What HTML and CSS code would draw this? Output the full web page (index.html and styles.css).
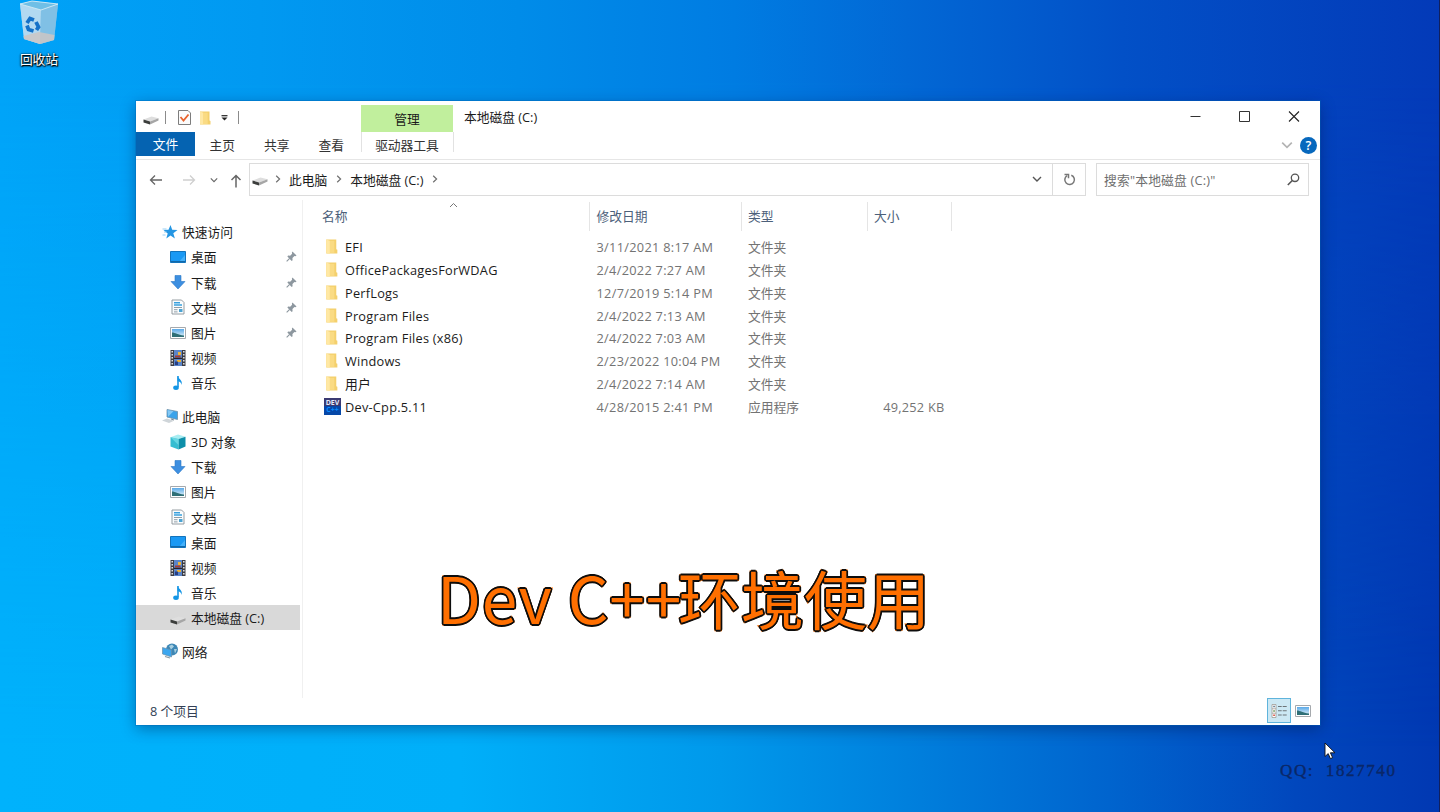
FILE: index.html
```
<!DOCTYPE html>
<html lang="zh-CN">
  <head>
    <meta charset="UTF-8" />
    <meta name="viewport" content="width=device-width, initial-scale=1.0" />
    <title>本地磁盘 (C:)</title>
    <link rel="stylesheet" href="styles.css">
  </head>

  <body>
    <!-- shared icons -->
    <svg class="sprite" width="0" height="0">
      <defs>
        <linearGradient id="sky" x1="0" y1="0" x2="0" y2="1">
          <stop offset="0" stop-color="#5aa9e8" />
          <stop offset="1" stop-color="#e4f3f8" />
        </linearGradient>
      </defs>
      <symbol id="drive" viewBox="0 0 16 16">
        <path d="M.5 9.500 8.500 6.500l7 1.800-8.500 3.200z" fill="#dedede" />
        <path d="M.5 9.500 7 11.500V14.500L.5 12.500z" fill="#3c3e3c" />
        <path d="M7 11.500 15.500 8.300V10.500L7 14.500z" fill="#a6a6a6" />
      </symbol>
      <symbol id="folder" viewBox="0 0 16 16">
        <path d="M3 1.500h9.500v9l1 .5v3.500H3z" fill="#f4d06d" />
        <path d="M3 1.500l3.500 1.200V15L3 13.800z" fill="#ffe8a4" />
        <path d="M6.500 2.700h4.200V14H6.500z" fill="#fadb83" />
      </symbol>
      <symbol id="star" viewBox="0 0 16 16">
        <path d="M8.500 1l1.700 4.700 5.300.2-4.200 3.300 1.600 5.300-4.400-3-4.200 3 1.400-5L1.500 6l5-.3z" fill="#2496e3" />
        <path d="M.5 5h4M.5 11h3M2 8h3" stroke="#7cc3f3" stroke-width=".8" />
      </symbol>
      <symbol id="desktop" viewBox="0 0 16 16">
        <path d="M.5 2.500h15v11H.5z" fill="#1a99f4" stroke="#1373bb" />
        <path d="M9 13 15 6v7z" fill="#45b1fa" />
        <path d="M1 12.500h14" stroke="#1268a8" />
      </symbol>
      <symbol id="down" viewBox="0 0 16 16">
        <path d="M5 1.500h6v6h4L8 15 1 7.500h4z" fill="#3d8fe0" stroke="#2b78c8" stroke-width=".6" />
      </symbol>
      <symbol id="doc" viewBox="0 0 16 16">
        <path d="M2 1h9.500L14 3.500V15H2z" fill="#fafcfd" stroke="#8b9399" stroke-width=".9" />
        <path d="M4 3.800h6M4 6h8" stroke="#39a0dd" stroke-width="1.500" />
        <path d="M4 8.500h8M4 10.700h3.500M4 12.900h3.500" stroke="#929da5" />
        <path d="M9 10h3.500v3H9z" fill="#4aa3d3" />
      </symbol>
      <symbol id="picture" viewBox="0 0 16 16">
        <path d="M.5 2.500h15v11H.5z" fill="#fff" stroke="#a5a9ad" />
        <path d="M2 4h12v8H2z" fill="url(#sky)" />
        <path d="M2 7.500c3 0 6 2.500 12 3v1.500H2z" fill="#2f6f76" />
      </symbol>
      <symbol id="video" viewBox="0 0 16 16">
        <path d="M.5 0h15v16H.5z" fill="#3c3c42" />
        <path d="M4 0h8v16H4z" fill="#5b85c8" />
        <path d="M2.200 1v15M13.800 1v15" stroke="#e3e3e3" stroke-width="1.500" stroke-dasharray="1.500 1.500" />
        <path d="M8 2h3v3H8zM7 10h4v2H7z" fill="#f0b433" />
        <path d="M5 5.500h5l1 2H5z" fill="#a83b34" />
        <path d="M4 7.800h8v1.200H4z" fill="#25252a" />
        <path d="M5 11.500h3V15H5z" fill="#293f83" />
      </symbol>
      <symbol id="music" viewBox="0 0 16 16">
        <path d="M8 1v11" stroke="#1495e5" stroke-width="1.600" />
        <ellipse cx="6" cy="12.700" rx="2.800" ry="2.200" fill="#1495e5" />
        <path d="M7.500 1C9 4.500 13 5 11.500 10c0-2.500-2-3.500-4-4z" fill="#1495e5" />
      </symbol>
      <symbol id="pc" viewBox="0 0 16 16">
        <path d="M5 1.500l10.500 2v8L5 9z" fill="#3aa3ea" stroke="#6e91a8" stroke-width=".8" />
        <path d="M5.500 2l6 1.200L6 8.800z" fill="#83c8f5" />
        <path d="M0 12.500 5 10.500l7 2.200L7 15z" fill="#cfd5d9" />
        <path d="M9 11l3 1" stroke="#7a8993" />
      </symbol>
      <symbol id="cube" viewBox="0 0 16 16">
        <path d="M8 .5l7.500 2.300L8.500 5 .5 3.200z" fill="#a8edf2" />
        <path d="M.5 3.200 8.500 5v10.500L.5 12.500z" fill="#35bdd1" />
        <path d="M8.500 5l7-2.200v9.700l-7 3z" fill="#0d8fa9" />
        <path d="M.5 3.200 8.500 5v6z" fill="#64d6e2" />
      </symbol>
      <symbol id="network" viewBox="0 0 16 16">
        <circle cx="10" cy="6.500" r="6" fill="#3d87b5" />
        <path d="M7 3l3-1.500 2 2-3 3zM12 6l3 0-2 4.500z" fill="#a7cedf" />
        <path d="M.5 4.500l9 2.500v7l-9-3z" fill="#3ba6ef" stroke="#6c8fa7" stroke-width=".7" />
        <path d="M3 13.500l5 1.500" stroke="#8897a0" stroke-width="1.300" />
      </symbol>
      <symbol id="pin" viewBox="0 0 12 12">
        <path d="M7 .5 11.500 5l-1.300.7-1-.2L7 7.700l.2 2.300-1 .8L1.500 6l.8-1 2.200.2L6.700 3l-.3-1.200z" fill="#8d979f" />
        <path d="M4 8 .7 11.300" stroke="#8d979f" stroke-width="1.200" />
      </symbol>
      <symbol id="chevron-right" viewBox="0 0 8 8">
        <path d="M2.200 .8 5.600 4 2.200 7.200" fill="none" stroke="#707070" stroke-width="1.200" />
      </symbol>
      <symbol id="chevron-down" viewBox="0 0 10 10">
        <path d="M1 3l4 4 4-4" fill="none" stroke="currentColor" stroke-width="1.400" />
      </symbol>
    </svg>

    <div class="recycle-bin">
      <svg width="42" height="46" viewBox="0 0 42 46">
        <path d="M1 4 13 1l26 3-4 36-14 4L5 39z" fill="#a8d2ec" opacity=".85" />
        <path d="M1 4l21 6-1 34L5 39z" fill="#b9dcf1" opacity=".85" />
        <path d="M22 10l17-6-4 36-14 4z" fill="#7cbde2" opacity=".8" />
        <path d="M1 4 13 1l26 3-17 6z" fill="#6fbfe6" stroke="#d4ebf5" stroke-width=".9" />
        <path d="M4.500 36 20 32l15.500 3-.5 5-14 4L5 39z" fill="#cdc6c4" opacity=".85" />
        <g fill="none" stroke="#1471c8" stroke-width="3.800">
          <path d="M8 23l3-4.500 4 1.500" />
          <path d="M17 22l2.500 5-2 3" />
          <path d="M14.500 31l-5-1.500-1.500-4" />
        </g>
      </svg>
      <span>回收站</span>
    </div>

    <div class="window">
      <div class="titlebar">
        <div class="quick-tools">
          <svg class="tool-drive" width="16" height="16"><use href="#drive" /></svg>
          <i class="sep"></i>
          <svg class="tool-check" width="13" height="15" viewBox="0 0 13 15">
            <path d="M.5.500H10L12.500 3v11.500H.5z" fill="#fbfbfb" stroke="#7d7d7d" />
            <path d="M2.500 7l3 3.500L10.500 4.500" fill="none" stroke="#e8622c" stroke-width="1.800" />
          </svg>
          <svg class="tool-folder" width="16" height="16"><use href="#folder" /></svg>
          <svg class="tool-more" width="7" height="6" viewBox="0 0 7 6">
            <path d="M.5.700h6" stroke="#222" stroke-width="1.200" />
            <path d="M.5 2.500h6l-3 3z" fill="#222" />
          </svg>
          <i class="sep"></i>
        </div>
        <div class="context-tab">管理</div>
        <div class="title">本地磁盘 (C:)</div>
        <div class="controls">
          <svg width="12" height="12" viewBox="0 0 12 12"><path d="M.5 5.500h10" stroke="#333" /></svg>
          <svg width="12" height="12" viewBox="0 0 12 12"><path d="M.5.500h10v10H.5z" fill="none" stroke="#333" /></svg>
          <svg width="12" height="12" viewBox="0 0 12 12"><path d="M1 .5l10 10M11 .5 1 10.500" stroke="#222" stroke-width="1.100" /></svg>
        </div>
      </div>

      <div class="ribbon">
        <div class="tab file">文件</div>
        <div class="tab">主页</div>
        <div class="tab">共享</div>
        <div class="tab">查看</div>
        <div class="tab drive-tools">驱动器工具</div>
        <div class="ribbon-right">
          <svg width="12" height="12" viewBox="0 0 10 10" color="#b4b4b4"><use href="#chevron-down" /></svg>
          <span class="help">?</span>
        </div>
      </div>

      <div class="address-row">
        <div class="nav-buttons">
          <svg width="14" height="12" viewBox="0 0 14 12"><path d="M13 6H1.500M6 1.500 1.500 6 6 10.500" fill="none" stroke="#666" stroke-width="1.300" /></svg>
          <svg width="14" height="12" viewBox="0 0 14 12"><path d="M1 6h11.500M8 1.500 12.500 6 8 10.500" fill="none" stroke="#cfcfcf" stroke-width="1.300" /></svg>
          <svg class="history" width="8" height="8" color="#666"><use href="#chevron-down" /></svg>
          <svg class="up" width="12" height="14" viewBox="0 0 12 14"><path d="M6 13.500V1.500M1.500 6 6 1.500 10.500 6" fill="none" stroke="#666" stroke-width="1.500" /></svg>
        </div>
        <div class="address">
          <svg class="addr-drive" width="16" height="16"><use href="#drive" /></svg>
          <svg class="crumb-arrow" width="8" height="8"><use href="#chevron-right" /></svg>
          <span>此电脑</span>
          <svg class="crumb-arrow next" width="8" height="8"><use href="#chevron-right" /></svg>
          <span>本地磁盘 (C:)</span>
          <svg class="crumb-arrow next" width="8" height="8"><use href="#chevron-right" /></svg>
          <svg class="addr-down" width="10" height="10" color="#555"><use href="#chevron-down" /></svg>
          <div class="refresh">
            <svg width="13" height="13" viewBox="0 0 13 13">
              <path d="M8.300 2.200a4.800 4.800 0 1 1-4.200.4" fill="none" stroke="#777" stroke-width="1.500" />
              <path d="M1.500 1.500h4v3.800" fill="none" stroke="#777" stroke-width="1.500" />
            </svg>
          </div>
        </div>
        <div class="search">
          <span>搜索"本地磁盘 (C:)"</span>
          <svg width="13" height="13" viewBox="0 0 13 13">
            <circle cx="8" cy="4.800" r="3.700" fill="none" stroke="#555" stroke-width="1.300" />
            <path d="M5.300 7.500.8 12" stroke="#555" stroke-width="1.600" />
          </svg>
        </div>
      </div>

      <div class="main">
        <div class="sidebar">
          <div class="nav-item root"><svg><use href="#star" /></svg>快速访问</div>
          <div class="nav-item"><svg><use href="#desktop" /></svg>桌面<svg class="pin"><use href="#pin" /></svg></div>
          <div class="nav-item"><svg><use href="#down" /></svg>下载<svg class="pin"><use href="#pin" /></svg></div>
          <div class="nav-item"><svg><use href="#doc" /></svg>文档<svg class="pin"><use href="#pin" /></svg></div>
          <div class="nav-item"><svg><use href="#picture" /></svg>图片<svg class="pin"><use href="#pin" /></svg></div>
          <div class="nav-item"><svg><use href="#video" /></svg>视频</div>
          <div class="nav-item"><svg><use href="#music" /></svg>音乐</div>

          <div class="nav-item root gap"><svg><use href="#pc" /></svg>此电脑</div>
          <div class="nav-item"><svg><use href="#cube" /></svg>3D 对象</div>
          <div class="nav-item"><svg><use href="#down" /></svg>下载</div>
          <div class="nav-item"><svg><use href="#picture" /></svg>图片</div>
          <div class="nav-item"><svg><use href="#doc" /></svg>文档</div>
          <div class="nav-item"><svg><use href="#desktop" /></svg>桌面</div>
          <div class="nav-item"><svg><use href="#video" /></svg>视频</div>
          <div class="nav-item"><svg><use href="#music" /></svg>音乐</div>
          <div class="nav-item selected"><svg><use href="#drive" /></svg>本地磁盘 (C:)</div>

          <div class="nav-item root gap"><svg><use href="#network" /></svg>网络</div>
        </div>

        <div class="files">
          <div class="file-row head">
            <div class="name">名称
              <svg class="sort" width="9" height="6" viewBox="0 0 9 6"><path d="M1 5l3.500-3.500L8 5" fill="none" stroke="#777" /></svg>
            </div>
            <div>修改日期</div>
            <div>类型</div>
            <div>大小</div>
          </div>
          <div class="file-row"><div class="name"><svg><use href="#folder" /></svg>EFI</div><div class="date">3/11/2021 8:17 AM</div><div>文件夹</div><div></div></div>
          <div class="file-row"><div class="name"><svg><use href="#folder" /></svg>OfficePackagesForWDAG</div><div class="date">2/4/2022 7:27 AM</div><div>文件夹</div><div></div></div>
          <div class="file-row"><div class="name"><svg><use href="#folder" /></svg>PerfLogs</div><div class="date">12/7/2019 5:14 PM</div><div>文件夹</div><div></div></div>
          <div class="file-row"><div class="name"><svg><use href="#folder" /></svg>Program Files</div><div class="date">2/4/2022 7:13 AM</div><div>文件夹</div><div></div></div>
          <div class="file-row"><div class="name"><svg><use href="#folder" /></svg>Program Files (x86)</div><div class="date">2/4/2022 7:03 AM</div><div>文件夹</div><div></div></div>
          <div class="file-row"><div class="name"><svg><use href="#folder" /></svg>Windows</div><div class="date">2/23/2022 10:04 PM</div><div>文件夹</div><div></div></div>
          <div class="file-row"><div class="name"><svg><use href="#folder" /></svg>用户</div><div class="date">2/4/2022 7:14 AM</div><div>文件夹</div><div></div></div>
          <div class="file-row"><div class="name"><span class="dev-icon"><b>DEV</b><b>C++</b></span>Dev-Cpp.5.11</div><div class="date">4/28/2015 2:41 PM</div><div>应用程序</div><div class="size">49,252 KB</div></div>
        </div>
      </div>

      <div class="statusbar">
        <span>8 个项目</span>
        <div class="view-buttons">
          <div class="view active">
            <svg width="16" height="14" viewBox="0 0 16 14">
              <path d="M1 .5h4v13H1zM1 4.800h4M1 9.200h4" fill="#fff" stroke="#a19d98" stroke-width=".8" />
              <path d="M2.300 2.500h1.500" stroke="#4b6c88" stroke-width="1.400" />
              <path d="M2.300 7h1.500" stroke="#5c8b45" stroke-width="1.400" />
              <path d="M2.300 11.300h1.500" stroke="#d13a2c" stroke-width="1.600" />
              <path d="M7 2.500h3.700M11.700 2.500h4M7 6.800h3.700M11.700 6.800h4M7 11h3.700M11.700 11h4" stroke="#6d7478" stroke-width="1.100" />
            </svg>
          </div>
          <div class="view"><svg width="16" height="16"><use href="#picture" /></svg></div>
        </div>
      </div>
    </div>

    <div class="caption"><span>Dev C++</span>环境使用</div>

    <svg class="cursor" width="12" height="18" viewBox="0 0 12 18">
      <path d="M1 1v13.500l3.200-2.900 2.200 5 2.200-1-2.200-4.800H11z" fill="#fff" stroke="#111" stroke-width=".9" />
    </svg>
    <div class="watermark">QQ:&nbsp; 1827740</div>
  </body>
</html>
```
FILE: styles.css
```
* {
  box-sizing: border-box;
}

body {
  position: relative;
  margin: 0;
  width: 1440px;
  height: 812px;
  overflow: hidden;
  font-family: "Open Sans", "Noto Sans CJK SC", sans-serif;
  font-size: 12.75px;
  color: #1b1b1b;
  background: linear-gradient(90deg, #00b2fc 0%, #00aff9 32%, #0099eb 50%, #0080dd 63%, #0064ce 77%, #0147bd 90%, #0138b2 100%);
}

/* wallpaper: the upper part is darker */
body::before {
  content: "";
  position: absolute;
  inset: 0;
  background: linear-gradient(90deg, #00a3f8 0%, #0199f1 18%, #008ce9 36%, #007ce2 51%, #0268d5 63%, #0250c7 78%, #033ab8 100%);
  -webkit-mask-image: linear-gradient(180deg, #000 0, #000 10%, transparent 92%);
  mask-image: linear-gradient(180deg, #000 0, #000 10%, transparent 92%);
}

body::after {
  content: "";
  position: absolute;
  top: 0;
  right: 0;
  width: 1px;
  height: 100%;
  background-color: #10205e;
}

.sprite {
  position: absolute;
}

svg {
  flex: none;
}

.recycle-bin {
  position: absolute;
  left: 9px;
  top: 0;
  width: 60px;
  display: flex;
  flex-direction: column;
  align-items: center;
  color: #fff;
  text-shadow: 1px 1px 1px #000, 0 0 2px #000, 0 1px 2px rgba(0, 0, 0, 0.8);
}

.recycle-bin svg {
  margin-left: 2px;
}

.recycle-bin span {
  margin-top: 3px;
  line-height: 20px;
}

.window {
  position: absolute;
  left: 136px;
  top: 101px;
  width: 1184px;
  height: 624px;
  display: flex;
  flex-direction: column;
  background-color: #fff;
  box-shadow: 0 0 0 1px rgba(0, 100, 180, 0.35), 0 4px 14px rgba(0, 20, 70, 0.4);
}

/* title bar */
.titlebar {
  display: flex;
  height: 31px;
}

.quick-tools {
  display: flex;
  align-items: center;
  width: 225px;
  padding-left: 7px;
  padding-top: 2px;
}

.sep {
  width: 1px;
  height: 13px;
  background-color: #8b8b8b;
}

.tool-drive {
  margin-right: 6px;
}

.tool-check {
  margin-left: 12px;
}

.tool-folder {
  margin-left: 6px;
}

.tool-more {
  margin-left: 8px;
  margin-right: 10px;
}

.context-tab {
  width: 92px;
  height: 27px;
  margin-top: 4px;
  line-height: 28px;
  text-align: center;
  background-color: #c1ef9d;
}

.title {
  margin-left: 11px;
  line-height: 32px;
}

.controls {
  display: flex;
  gap: 37px;
  margin-left: auto;
  padding: 10px 20px 0 0;
}

/* ribbon tabs */
.ribbon {
  display: flex;
  height: 28px;
  border-bottom: 1px solid #e6e6e6;
}

.tab {
  width: 54.5px;
  height: 24px;
  line-height: 26px;
  text-align: center;
  color: #333;
}

.tab.file {
  width: 59px;
  line-height: 25px;
  color: #fff;
  background-color: #0563b1;
}

.tab.drive-tools {
  width: 93px;
  height: 20px;
  margin-left: 2px;
  border-left: 1px solid #e2e2e2;
  border-right: 1px solid #e2e2e2;
}

.ribbon-right {
  display: flex;
  align-items: center;
  gap: 7px;
  margin-left: auto;
  padding-right: 3px;
  height: 26px;
}

.help {
  width: 17px;
  height: 17px;
  border-radius: 50%;
  line-height: 17px;
  text-align: center;
  font-weight: 600;
  color: #fff;
  background-color: #0768bd;
}

/* address row */
.address-row {
  display: flex;
  align-items: center;
  height: 40px;
}

.nav-buttons {
  display: flex;
  align-items: center;
  width: 113px;
  padding-left: 13px;
  gap: 19px;
}

.nav-buttons .history {
  margin-left: -5px;
}

.nav-buttons .up {
  margin-left: -7px;
  margin-top: 2px;
}

.address {
  display: flex;
  align-items: center;
  width: 837px;
  height: 33px;
  padding-left: 2px;
  padding-bottom: 1px;
  border: 1px solid #dcdcdc;
}

.crumb-arrow {
  margin: 0 7px 0 6px;
}

.crumb-arrow.next {
  margin-left: 8px;
}

.addr-down {
  margin-left: auto;
}

.refresh {
  display: flex;
  align-items: center;
  justify-content: center;
  width: 33px;
  height: 31px;
  margin-left: 10px;
  margin-bottom: -1px;
  border-left: 1px solid #dcdcdc;
}

.search {
  display: flex;
  align-items: center;
  justify-content: space-between;
  width: 213px;
  height: 33px;
  margin-left: 10px;
  padding: 0 8px 1px 7px;
  border: 1px solid #dcdcdc;
  color: #6f6f6f;
}

.search span {
  letter-spacing: 0.2px;
}

/* sidebar and files */
.main {
  display: flex;
  height: 499px;
}

.sidebar {
  width: 167px;
  padding-top: 19.3px;
  border-right: 1px solid #f0f0f0;
}

.nav-item {
  display: flex;
  align-items: center;
  gap: 5px;
  width: 164px;
  height: 25.2px;
  padding-left: 34px;
}

.nav-item.root {
  padding-left: 26px;
  gap: 4px;
}

.nav-item.gap {
  margin-top: 8.3px;
}

.nav-item.selected {
  background-color: #d9d9d9;
}

.nav-item svg {
  width: 16px;
  height: 16px;
}

.nav-item .pin {
  width: 11px;
  height: 11px;
  margin-left: auto;
  margin-right: 3px;
}

.files {
  flex: 1;
  padding-top: 2px;
}

.file-row {
  display: grid;
  grid-template-columns: 287px 151.5px 126px 84px;
  height: 22.75px;
  line-height: 22.75px;
  color: #737373;
}

.file-row > div {
  padding-left: 6.5px;
  white-space: nowrap;
}

.file-row > .name {
  display: flex;
  align-items: center;
  padding-left: 20px;
  gap: 5px;
  letter-spacing: 0.24px;
  color: #1b1b1b;
}

.file-row > .date {
  letter-spacing: 0.3px;
}

.file-row svg {
  width: 17px;
  height: 17px;
  margin-top: -2px;
}

.file-row.head {
  height: 28px;
  line-height: 29px;
  margin-bottom: 6.5px;
}

.file-row.head > div {
  border-right: 1px solid #e5e5e5;
  color: #4c607a;
}

.file-row.head .name {
  padding-left: 19px;
  letter-spacing: 0;
}

.file-row.head .sort {
  width: 9px;
  height: 6px;
  margin-left: 96px;
  margin-top: -22px;
}

.file-row > .size {
  padding-left: 0;
  padding-right: 7px;
  text-align: right;
  letter-spacing: 0.25px;
}

.dev-icon {
  width: 17px;
  height: 17px;
  margin-left: 1px;
  margin-right: -1px;
  margin-top: -2px;
  padding-top: 1px;
  font-size: 7px;
  letter-spacing: 0;
  line-height: 7.5px;
  text-align: center;
  color: #e6ebfb;
  background: linear-gradient(#3a3a72 45%, #0648a8 50%);
}

.dev-icon b {
  display: block;
}

.dev-icon b + b {
  color: #0a8cff;
}

/* status bar */
.statusbar {
  display: flex;
  align-items: center;
  justify-content: space-between;
  flex: 1;
  padding-left: 14px;
  padding-bottom: 2px;
  padding-right: 5px;
  color: #333f55;
}

.view-buttons {
  display: flex;
}

.view {
  display: flex;
  align-items: center;
  justify-content: center;
  width: 24px;
  height: 25px;
}

.view.active {
  background-color: #cce8f4;
  border: 1px solid #5fb4dc;
}

.caption {
  position: absolute;
  left: 437px;
  top: 551px;
  font-family: "Noto Sans CJK SC", sans-serif;
  font-size: 63px;
  font-weight: 400;
  line-height: 90px;
  white-space: nowrap;
  color: #ff6f00;
  -webkit-text-stroke: 2.8px #ff6f00;
  paint-order: stroke fill;
  text-shadow:
    1.7px 0 #0d0d0d, -1.7px 0 #0d0d0d, 0 1.7px #0d0d0d, 0 -1.7px #0d0d0d,
    1.3px 1.3px #0d0d0d, -1.3px 1.3px #0d0d0d, 1.3px -1.3px #0d0d0d, -1.3px -1.3px #0d0d0d;
}

.caption span {
  display: inline-block;
  width: 241px;
  font-size: 64px;
  letter-spacing: 0.8px;
}

.cursor {
  position: absolute;
  left: 1324px;
  top: 742px;
}

.watermark {
  position: absolute;
  left: 1280px;
  top: 761px;
  font-family: "Liberation Serif", serif;
  font-size: 17px;
  line-height: 20px;
  letter-spacing: 1.6px;
  white-space: pre;
  color: #0a2768;
  -webkit-text-stroke: 0.4px #0a2768;
}
```
